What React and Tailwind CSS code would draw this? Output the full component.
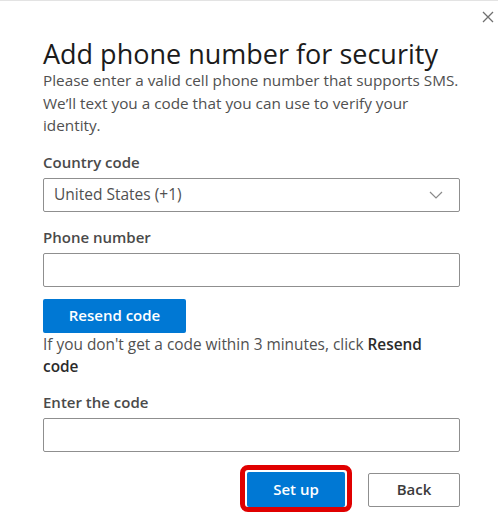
import React from "react";

function Chevron() {
  return (
    <svg width="14" height="8" viewBox="0 0 14 8" fill="none">
      <path d="M1 1l6 6 6-6" stroke="#8a8a8a" strokeWidth="1.2" />
    </svg>
  );
}

export default function App() {
  return (
    <div
      className="relative w-[498px] h-[525px] bg-white border-t border-[#e3e3e3] overflow-hidden"
      style={{ fontFamily: '"Open Sans", "Noto Sans", sans-serif' }}
    >
      <div className="absolute right-[4px] top-[10px]">
        <svg width="12" height="12" viewBox="0 0 12 12">
          <path d="M1 1l10 10M11 1L1 11" stroke="#707070" strokeWidth="1.3" />
        </svg>
      </div>
      <div className="pl-[43px] pr-[38px] pt-[36px]">
        <h1 className="text-[27px] leading-[34px] text-[#1b1b1b] whitespace-nowrap">
          Add phone number for security
        </h1>
        <p className="-mt-[2px] text-[15.3px] leading-[22.5px] text-[#505050] whitespace-nowrap">
          Please enter a valid cell phone number that supports SMS.
          <br />
          We’ll text you a code that you can use to verify your
          <br />
          identity.
        </p>

        <div className="mt-[15px] text-[15px] leading-[20px] font-semibold text-[#4a4a4a]">Country code</div>
        <div className="mt-[6px] h-[34px] border border-[#8f8f8f] rounded-[2px] flex items-center justify-between pl-[10px] pr-[16px]">
          <span className="text-[15.5px] text-[#505050]">United States (+1)</span>
          <Chevron />
        </div>

        <div className="mt-[15px] text-[15px] leading-[20px] font-semibold text-[#4a4a4a]">Phone number</div>
        <div className="mt-[6px] h-[34px] border border-[#8f8f8f] rounded-[2px]" />

        <button className="block mt-[12px] w-[143px] h-[34px] bg-[#0078d4] text-white text-[15px] font-semibold rounded-[2px]">
          Resend code
        </button>
        <p className="mt-[1px] text-[15.4px] leading-[22px] text-[#505050] whitespace-nowrap">
          If you don't get a code within 3 minutes, click <span className="font-semibold text-[#2b2b2b]">Resend</span>
          <br />
          <span className="font-semibold text-[#2b2b2b]">code</span>
        </p>

        <div className="mt-[14px] text-[15px] leading-[20px] font-semibold text-[#4a4a4a]">Enter the code</div>
        <div className="mt-[6px] h-[34px] border border-[#8f8f8f] rounded-[2px]" />

        <div className="mt-[13px] flex justify-end items-end">
          <div className="pt-[2px] px-[2px] pb-0 border-[5px] border-[#e00000] rounded-[8px]">
            <button className="block w-[98px] h-[35px] bg-[#0078d4] text-white text-[15px] font-semibold rounded-[2px]">
              Set up
            </button>
          </div>
          <button className="ml-[16px] mb-[5px] w-[92px] h-[34px] border border-[#8f8f8f] bg-white text-[#3b3b3b] text-[15px] font-semibold rounded-[2px]">
            Back
          </button>
        </div>
      </div>
    </div>
  );
}
